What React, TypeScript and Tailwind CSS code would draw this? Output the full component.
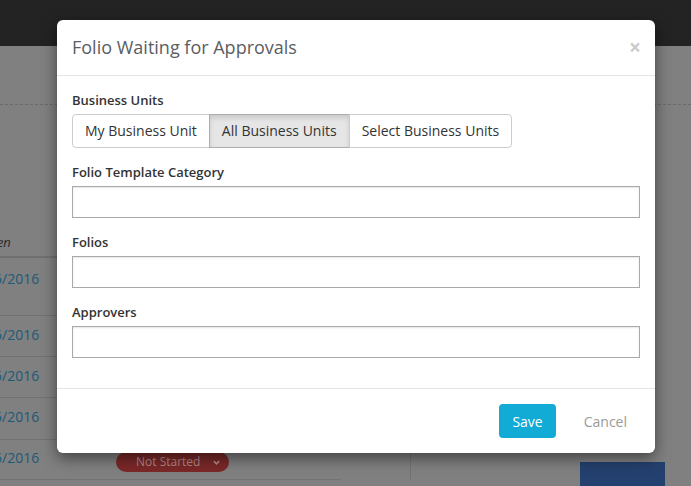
import React from "react";

const dates = [
  { h: "h-[58px]" },
  { h: "h-[41px]" },
  { h: "h-[41px]" },
  { h: "h-[42px]" },
  { h: "h-[40px]" },
];

export default function App() {
  return (
    <div className="relative w-[691px] h-[486px] overflow-hidden bg-[#808080] font-['Open_Sans',sans-serif]">
      {/* background page (dimmed) */}
      <div className="h-[46px] bg-[#232323]" />
      <div className="h-[59px] border-b border-dashed border-[#6a6a6a]" />
      <div className="flex">
        <div className="w-[341px] pt-[127px]">
          <div className="h-[26px] border-b-2 border-[#707070] text-[13px] italic text-[#2a2a2a] leading-[20px] -ml-[20px]">
            Open
          </div>
          {dates.map((d, i) => (
            <div
              key={i}
              className={`${d.h} border-b border-[#727272] flex ${i === 0 ? "items-start pt-[10px]" : "items-center pb-[4px]"} relative`}
            >
              <span className="-ml-[14px] text-[14px] text-[#1c5a78]">05/2016</span>
              {i === 4 && (
                <div className="absolute left-[116px] top-[12px] w-[113px] h-[20px] rounded-full bg-[#7b2828] flex items-center pl-[20px] text-[12px] text-[#b58a8a]">
                  Not Started
                  <svg className="ml-auto mr-[8px]" width="9" height="9" viewBox="0 0 10 10">
                    <path d="M2 3.5 L5 6.5 L8 3.5" fill="none" stroke="#b58a8a" strokeWidth="1.8" />
                  </svg>
                </div>
              )}
            </div>
          ))}
        </div>
        <div className="w-[69px]" />
        <div className="flex-1 border-l border-[#737373] relative">
          <div className="absolute left-[169px] top-[357px] w-[85px] h-[30px] bg-[#24406e]" />
        </div>
      </div>

      {/* modal */}
      <div className="absolute left-[57px] top-[20px] w-[598px] bg-white rounded-[6px] shadow-[0_5px_15px_rgba(0,0,0,0.5)]">
        <div className="px-[15px] py-[15px] border-b border-[#e5e5e5] flex items-center">
          <h4 className="text-[18px] leading-[25px] text-[#5a5d62]">Folio Waiting for Approvals</h4>
          <span className="ml-auto -mr-[1px] text-[21px] leading-[21px] font-bold text-[#cccccc]">×</span>
        </div>
        <div className="p-[15px] text-[#333]">
          <div className="mb-[15px]">
            <div className="text-[13px] font-semibold leading-[18px] mb-[5px]">Business Units</div>
            <div className="inline-flex text-[14px] leading-[20px]">
              <button className="px-[12px] py-[6px] border border-[#cccccc] rounded-l-[4px] bg-white text-[#333]">
                My Business Unit
              </button>
              <button className="px-[12px] py-[6px] border border-[#adadad] -ml-px bg-[#e6e6e6] text-[#333] shadow-[inset_0_3px_5px_rgba(0,0,0,0.125)]">
                All Business Units
              </button>
              <button className="px-[12px] py-[6px] border border-[#cccccc] -ml-px rounded-r-[4px] bg-white text-[#333]">
                Select Business Units
              </button>
            </div>
          </div>
          {["Folio Template Category", "Folios", "Approvers"].map((l) => (
            <div key={l} className="mb-[15px]">
              <div className="text-[13px] font-semibold leading-[18px] mb-[5px]">{l}</div>
              <div className="h-[32px] w-full border border-[#a9a9a9] bg-white shadow-[inset_0_1px_2px_rgba(0,0,0,0.1)]" />
            </div>
          ))}
        </div>
        <div className="p-[15px] border-t border-[#e5e5e5] flex justify-end items-center gap-[15px]">
          <button className="h-[34px] px-[13px] rounded-[4px] bg-[#12abd6] text-white text-[14px]">Save</button>
          <button className="h-[34px] px-[13px] text-[14px] text-[#9a9a9a]">Cancel</button>
        </div>
      </div>
    </div>
  );
}
